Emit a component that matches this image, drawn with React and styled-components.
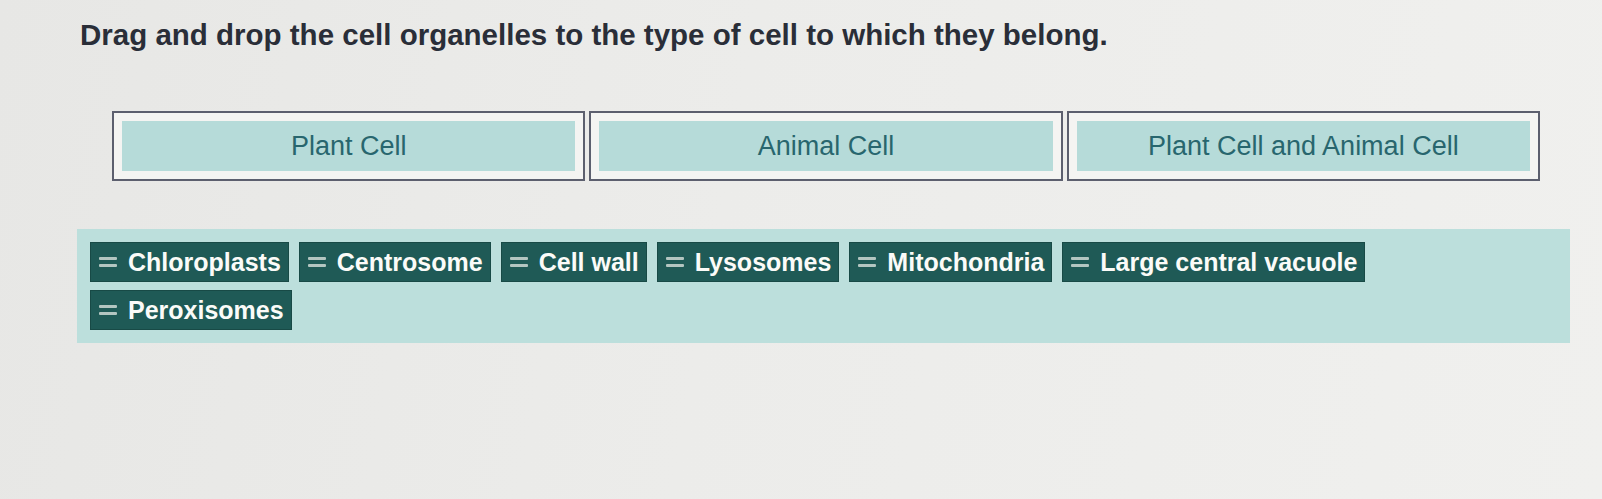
import React from 'react'
import styled, { createGlobalStyle } from 'styled-components'

const GlobalStyle = createGlobalStyle`
    html, body {
        margin: 0;
        padding: 0;
        background: #ebebe9;
    }
    body {
        font-family: "Liberation Sans", Arial, sans-serif;
    }
`

const Page = styled.div`
    width: 1602px;
    height: 499px;
    box-sizing: border-box;
    padding-top: 18px;
    background: linear-gradient(100deg, #e7e7e5 0%, #ececea 45%, #f0f0ee 100%);
    overflow: hidden;
`

const Title = styled.h1`
    margin: 0 0 0 80px;
    font-size: 29.5px;
    line-height: 34px;
    font-weight: 700;
    color: #2a2e38;
`

const Zones = styled.div`
    display: grid;
    grid-template-columns: repeat(3, 1fr);
    gap: 4px;
    width: 1428px;
    margin: 59px 0 0 112px;
`

const Zone = styled.div`
    border: 2px solid #5c5f6e;
    background: #f4f4f2;
    padding: 8px;
`

const ZoneLabel = styled.div`
    height: 50px;
    display: flex;
    align-items: center;
    justify-content: center;
    background: #b6dbd9;
    color: #28666e;
    font-size: 27px;
`

const Bank = styled.div`
    display: flex;
    flex-wrap: wrap;
    align-content: flex-start;
    gap: 8px 10px;
    width: 1493px;
    height: 114px;
    box-sizing: border-box;
    margin: 48px 0 0 77px;
    padding: 13px 13px;
    background: #bcdfdc;
`

const Tag = styled.div`
    display: flex;
    align-items: center;
    gap: 10px;
    height: 40px;
    box-sizing: border-box;
    padding: 0 7px;
    background: #1f5a56;
    border: 1px solid #184a46;
    color: #fbfbf8;
    font-size: 25px;
    font-weight: 700;
    white-space: nowrap;
`

const Grip = () => (
    <svg width="20" height="12" viewBox="0 0 20 12">
        <rect x="1" y="1" width="18" height="3" rx="1" fill="#b3c6c1" />
        <rect x="1" y="8" width="18" height="3" rx="1" fill="#b3c6c1" />
    </svg>
)

const zones = ['Plant Cell', 'Animal Cell', 'Plant Cell and Animal Cell']

const organelles = [
    'Chloroplasts',
    'Centrosome',
    'Cell wall',
    'Lysosomes',
    'Mitochondria',
    'Large central vacuole',
    'Peroxisomes',
]

const App = () => {
    return (
        <Page>
            <GlobalStyle />
            <Title>Drag and drop the cell organelles to the type of cell to which they belong.</Title>
            <Zones>
                {zones.map(name => (
                    <Zone key={name}>
                        <ZoneLabel>{name}</ZoneLabel>
                    </Zone>
                ))}
            </Zones>
            <Bank>
                {organelles.map(name => (
                    <Tag key={name}>
                        <Grip />
                        {name}
                    </Tag>
                ))}
            </Bank>
        </Page>
    )
}

export default App
